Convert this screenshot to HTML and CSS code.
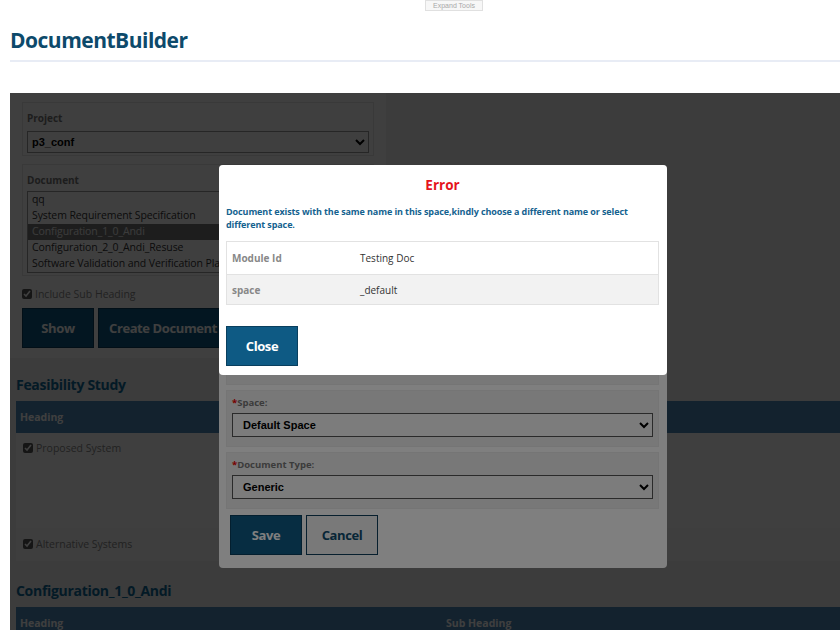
FILE: index.html
```html
<!DOCTYPE html>
<html lang="en">
<head>
    <meta charset="UTF-8">
    <meta name="viewport" content="width=device-width, initial-scale=1.0">
    <title>DocumentBuilder</title>
    <link rel="stylesheet" href="styles.css">
</head>
<body>
    <div class="tools-bar">
        <button class="expand-btn">Expand Tools</button>
    </div>

    <h1 class="app-title">DocumentBuilder</h1>

    <div class="workspace">
        <div class="side-panel">
            <div class="field-group">
                <label class="field-label">Project</label>
                <select class="field-select">
                    <option>p3_conf</option>
                </select>
            </div>
            <div class="field-group">
                <label class="field-label">Document</label>
                <div class="doc-list">
                    <div class="doc-item">qq</div>
                    <div class="doc-item">System Requirement Specification</div>
                    <div class="doc-item selected">Configuration_1_0_Andi</div>
                    <div class="doc-item">Configuration_2_0_Andi_Resuse</div>
                    <div class="doc-item">Software Validation and Verification Plan</div>
                </div>
            </div>
            <label class="check-row"><input type="checkbox" checked> Include Sub Heading</label>
            <div class="btn-row">
                <button class="btn btn-primary">Show</button>
                <button class="btn btn-primary">Create Document</button>
            </div>
        </div>

        <h2 class="doc-title">Feasibility Study</h2>
        <table class="doc-table">
            <thead>
                <tr><th>Heading</th></tr>
            </thead>
            <tbody>
                <tr class="tall-row"><td><label class="check-row"><input type="checkbox" checked> Proposed System</label></td></tr>
                <tr class="alt-row"><td><label class="check-row"><input type="checkbox" checked> Alternative Systems</label></td></tr>
            </tbody>
        </table>

        <h2 class="doc-title">Configuration_1_0_Andi</h2>
        <table class="doc-table">
            <thead>
                <tr><th class="col-heading">Heading</th><th>Sub Heading</th></tr>
            </thead>
        </table>

        <div class="backdrop"></div>

        <div class="modal create-modal">
            <h3 class="modal-heading">Create Document</h3>
            <div class="form-group">
                <label class="form-label"><span class="req">*</span>Module Id:</label>
                <input class="form-input" type="text" value="Testing Doc">
            </div>
            <div class="form-group">
                <label class="form-label"><span class="req">*</span>Document Name:</label>
                <input class="form-input" type="text" value="Testing Doc">
            </div>
            <div class="form-group">
                <label class="form-label">Description:</label>
                <input class="form-input" type="text" value="">
            </div>
            <div class="form-group">
                <label class="form-label"><span class="req">*</span>Space:</label>
                <select class="form-select">
                    <option>Default Space</option>
                </select>
            </div>
            <div class="form-group">
                <label class="form-label"><span class="req">*</span>Document Type:</label>
                <select class="form-select">
                    <option>Generic</option>
                </select>
            </div>
            <div class="modal-actions">
                <button class="btn btn-primary">Save</button>
                <button class="btn btn-outline">Cancel</button>
            </div>
        </div>

        <div class="backdrop"></div>

        <div class="modal error-modal">
            <div class="error-title">Error</div>
            <p class="error-msg">Document exists with the same name in this space,kindly choose a different name or select different space.</p>
            <table class="detail-table">
                <tr><td class="detail-key">Module Id</td><td>Testing Doc</td></tr>
                <tr class="alt-row"><td class="detail-key">space</td><td>_default</td></tr>
            </table>
            <button class="btn btn-primary">Close</button>
        </div>
    </div>
</body>
</html>
```

FILE: styles.css
```css
body {
    margin: 0;
    padding: 0 0 0 10px;
    font-family: "Open Sans", Arial, sans-serif;
    background: #fff;
    overflow: hidden;
}
.tools-bar {
    display: flex;
    padding-left: 415px;
    height: 11px;
}
.expand-btn {
    width: 58px;
    height: 11px;
    padding: 0;
    font-family: "Liberation Sans", Arial, sans-serif;
    font-size: 7px;
    line-height: 9px;
    color: #a8a8a8;
    background: #f7f7f7;
    border: 1px solid #e0e0e0;
}
.app-title {
    margin: 14px 0 0;
    padding-bottom: 5px;
    font-size: 21px;
    line-height: 30px;
    letter-spacing: -0.5px;
    font-weight: 700;
    color: #0d4a6b;
    border-bottom: 2px solid #e8ecf5;
}
.workspace {
    position: relative;
    margin-top: 31px;
    height: 600px;
    background: #f0f0f0;
}
.side-panel {
    width: 352px;
    padding: 9px 12px 10px;
    background: #fff;
}
.field-group {
    padding: 8px 4px 2px;
    border: 1px solid #e6e6e6;
    background: #fcfcfc;
    margin-bottom: 8px;
}
.field-label {
    display: block;
    font-size: 10px;
    line-height: 14px;
    font-weight: 700;
    color: #777;
    margin-bottom: 4px;
}
.field-select {
    width: 100%;
    height: 22px;
    font-family: "Liberation Sans", Arial, sans-serif;
    font-size: 11px;
    font-weight: 700;
    border: 1px solid #999;
    background: #fff;
}
.doc-list {
    height: 80px;
    border: 1px solid #999;
    background: #fff;
    overflow: hidden;
}
.doc-item {
    height: 16px;
    line-height: 15px;
    padding-left: 4px;
    font-size: 10.5px;
    letter-spacing: -0.1px;
    color: #333;
    white-space: nowrap;
}
.doc-item.selected {
    background: #777;
    color: #eee;
}
.check-row {
    display: flex;
    align-items: center;
    gap: 3px;
    font-size: 10.5px;
    line-height: 14px;
    color: #888;
}
.check-row input {
    margin: 0;
    width: 10px;
    height: 10px;
    accent-color: #555;
}
.side-panel .check-row {
    margin-top: 11px;
}
.btn-row {
    display: flex;
    gap: 4px;
    margin-top: 7px;
}
.btn {
    height: 40px;
    padding: 0 10px;
    font-family: "Open Sans", Arial, sans-serif;
    font-size: 13px;
    font-weight: 700;
    letter-spacing: -0.4px;
    cursor: pointer;
}
.btn-primary {
    min-width: 72px;
    background: #0e5a84;
    color: #fff;
    border: 1px solid #093f5e;
}
.btn-outline {
    min-width: 72px;
    background: #f2f2f2;
    color: #0e4c6e;
    border: 1px solid #0e3f5c;
}
.doc-title {
    margin: 17px 0 6px 6px;
    font-size: 14px;
    line-height: 20px;
    letter-spacing: -0.3px;
    font-weight: 700;
    color: #0f6a99;
}
.doc-table {
    width: calc(100% - 6px);
    margin-left: 6px;
    margin-bottom: 20px;
    border-collapse: collapse;
    font-size: 10.5px;
}
.doc-table th {
    height: 32px;
    padding: 0 4px;
    text-align: left;
    font-weight: 700;
    color: #fff;
    background: #4c88b8;
}
.doc-table th.col-heading {
    width: 418px;
}
.doc-table td {
    padding: 8px 7px;
    vertical-align: top;
    background: #fff;
}
.doc-table .tall-row td {
    height: 79px;
}
.doc-table .alt-row td {
    background: #f8f8f8;
    padding: 9px 7px 10px;
}
.backdrop {
    position: absolute;
    inset: 0;
    background: rgba(0, 0, 0, 0.5);
}
.modal {
    position: absolute;
    left: 209px;
    top: 72px;
    width: 448px;
    box-sizing: border-box;
    background: #fff;
    border-radius: 4px;
}
.create-modal {
    padding: 11px 8px 13px 7px;
}
.modal-heading {
    margin: 0 0 8px 4px;
    font-size: 15px;
    line-height: 20px;
    color: #0e4c6e;
}
.form-group {
    padding: 5px 5px 9px;
    margin-bottom: 5px;
    background: #f0f0f0;
    border: 1px solid #ebebeb;
}
.form-label {
    display: block;
    font-size: 9.5px;
    line-height: 14px;
    font-weight: 700;
    color: #777;
    margin-bottom: 3px;
}
.req {
    color: #e00;
}
.form-input,
.form-select {
    display: block;
    width: 100%;
    height: 24px;
    box-sizing: border-box;
    font-family: "Liberation Sans", Arial, sans-serif;
    font-size: 11px;
    font-weight: 700;
    color: #000;
    background: #f8f8f8;
    border: 1px solid #555;
    padding: 0 6px;
}
.modal-actions {
    display: flex;
    gap: 4px;
    padding: 1px 0 0 4px;
}
.error-modal {
    height: 210px;
    padding: 11px 8px 10px 7px;
}
.error-title {
    text-align: center;
    font-size: 13.5px;
    line-height: 18px;
    font-weight: 700;
    color: #e5141c;
}
.error-msg {
    margin: 11px 0 10px;
    font-size: 9px;
    line-height: 13px;
    letter-spacing: -0.1px;
    font-weight: 700;
    color: #14628f;
}
.detail-table {
    width: 100%;
    border-collapse: collapse;
    border: 1px solid #e2e2e2;
    font-size: 10px;
    margin-bottom: 21px;
}
.detail-table td {
    height: 32px;
    padding: 0 5px;
    color: #333;
    border-top: 1px solid #e2e2e2;
}
.detail-table td.detail-key {
    width: 118px;
    font-weight: 700;
    color: #888;
}
.detail-table .alt-row td {
    background: #f2f2f2;
    height: 29px;
}
```
